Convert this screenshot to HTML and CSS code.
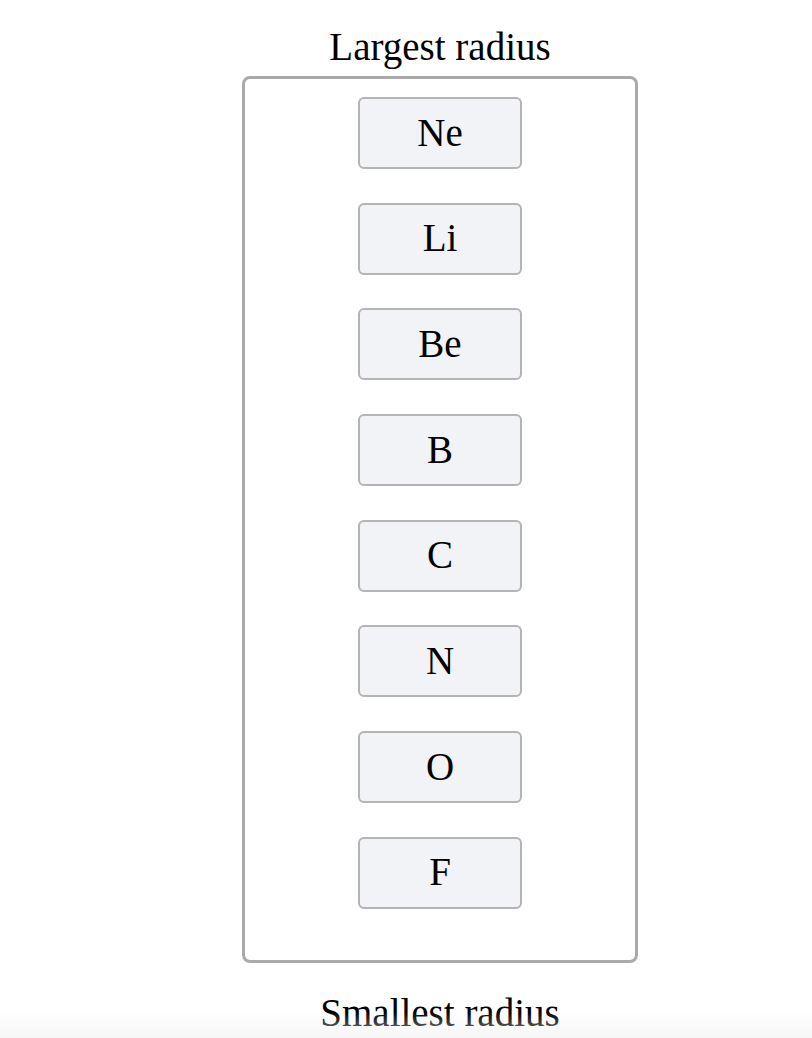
FILE: index.html
```html
<!DOCTYPE html>
<html lang="en">
<head>
<meta charset="utf-8">
<title>Atomic radius order</title>
<link rel="stylesheet" href="styles.css">
</head>
<body>
<main class="column">
  <div class="label label-top">Largest radius</div>
  <div class="stack">
    <div class="item">Ne</div>
    <div class="item">Li</div>
    <div class="item">Be</div>
    <div class="item">B</div>
    <div class="item">C</div>
    <div class="item">N</div>
    <div class="item">O</div>
    <div class="item">F</div>
  </div>
  <div class="label label-bottom">Smallest radius</div>
</main>
<div class="fade"></div>
</body>
</html>
```

FILE: styles.css
```css
html, body {
  margin: 0;
  padding: 0;
  background: #ffffff;
}

body {
  font-family: "Liberation Serif", "Times New Roman", serif;
  color: #000000;
  overflow: hidden;
  height: 1038px;
}

.column {
  width: 396px;
  margin-left: 242px;
  padding-top: 24px;
  display: flex;
  flex-direction: column;
  align-items: stretch;
}

.label {
  font-size: 39px;
  line-height: 46px;
  text-align: center;
}

.label-top {
  margin-bottom: 6px;
}

.label-bottom {
  margin-top: 27px;
}

.stack {
  border: 3px solid #aaaaaa;
  border-radius: 8px;
  padding: 18px 0 17px;
  display: flex;
  flex-direction: column;
  align-items: center;
}

.item {
  box-sizing: border-box;
  width: 164px;
  height: 72px;
  margin-bottom: 33.7px;
  border: 2px solid #b4b4b4;
  border-radius: 6px;
  background: #f2f3f6;
  font-size: 39px;
  line-height: 46px;
  display: flex;
  align-items: center;
  justify-content: center;
  padding-bottom: 1px;
}

.fade {
  position: fixed;
  left: 0;
  right: 0;
  bottom: 0;
  height: 26px;
  background: linear-gradient(to bottom, rgba(240, 240, 240, 0), rgba(240, 240, 240, 0.6));
  pointer-events: none;
}
```
